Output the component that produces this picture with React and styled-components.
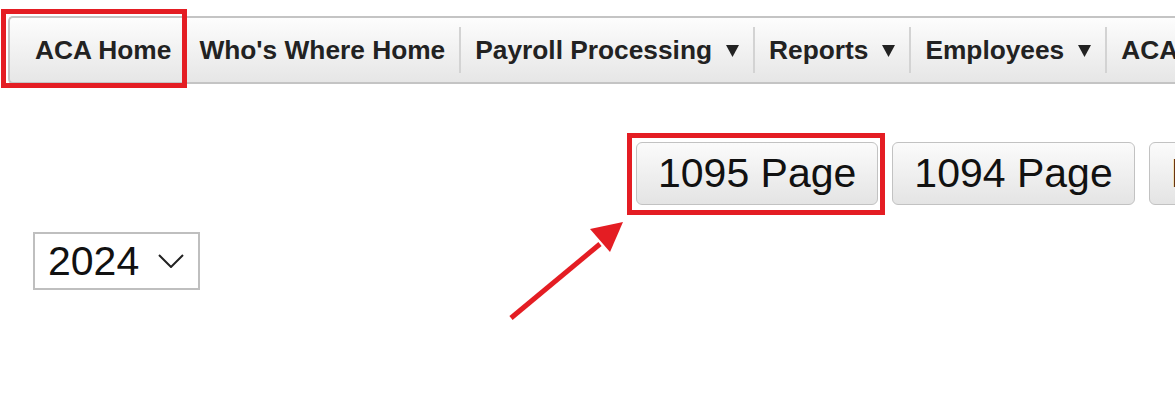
import React from 'react';
import styled, { createGlobalStyle } from 'styled-components';

const Global = createGlobalStyle`
  html, body { margin: 0; padding: 0; background: #fff; overflow: hidden; }
  body { font-family: "Liberation Sans", Arial, Helvetica, sans-serif; }
`;

const Page = styled.div`
  position: relative;
  width: 1175px;
  height: 397px;
  overflow: hidden;
  box-sizing: border-box;
  padding: 16px 0 0 8px;
`;

const NavBar = styled.nav`
  display: flex;
  align-items: stretch;
  width: 1320px;
  height: 68px;
  box-sizing: border-box;
  border: 2px solid #c4c4c4;
  border-right: none;
  border-radius: 5px 0 0 5px;
  background: linear-gradient(#fdfdfd, #e6e6e6);
  padding-left: 11px;
  white-space: nowrap;
`;

const NavItem = styled.div`
  display: flex;
  align-items: center;
  padding: 0 ${p => (p.$first ? 12 : 14)}px 0 14px;
  font-size: 26.3px;
  font-weight: 700;
  color: #222;
`;

const Separator = styled.div`
  width: 2px;
  height: 46px;
  align-self: center;
  background: #d3d3d3;
`;

const Caret = styled.svg`
  width: 13px;
  height: 12px;
  margin-left: 14px;
  margin-top: 1px;
`;

const Highlight = styled.div`
  position: relative;
  display: flex;
  &::after {
    content: "";
    position: absolute;
    top: ${p => p.$t}px;
    right: ${p => p.$r}px;
    bottom: ${p => p.$b}px;
    left: ${p => p.$l}px;
    border: 5px solid #e41d23;
    pointer-events: none;
  }
`;

const ButtonRow = styled.div`
  display: flex;
  gap: 14px;
  margin-top: 58px;
  padding-left: 628px;
  width: 900px;
`;

const PageButton = styled.button`
  height: 63px;
  padding: 0 21px;
  font-family: "Liberation Sans", Arial, sans-serif;
  font-size: 41px;
  color: #111;
  border: 1.5px solid #c2c2c2;
  border-radius: 6px;
  background: linear-gradient(#fbfbfb, #e4e4e4);
  white-space: nowrap;
  flex-shrink: 0;
`;

const YearSelect = styled.div`
  display: flex;
  align-items: center;
  justify-content: space-between;
  width: 167px;
  height: 58px;
  box-sizing: border-box;
  margin: 27px 0 0 25px;
  padding: 0 14px 0 13px;
  border: 2px solid #bfbfbf;
  font-size: 41px;
  color: #111;
`;

const Chevron = styled.svg`
  width: 26px;
  height: 14px;
`;

const ArrowOverlay = styled.svg`
  position: absolute;
  left: 0;
  top: 0;
  width: 1175px;
  height: 397px;
  pointer-events: none;
`;

const CaretIcon = () => (
  <Caret viewBox="0 0 13 12"><path d="M0 0 H13 L6.5 12 Z" fill="#222" /></Caret>
);

export default function App() {
  const menus = [
    { label: "Who's Where Home" },
    { label: 'Payroll Processing', caret: true },
    { label: 'Reports', caret: true },
    { label: 'Employees', caret: true },
    { label: 'ACA', caret: true },
  ];
  return (
    <>
      <Global />
      <Page>
        <NavBar>
          <Highlight $t={-9} $r={-4} $b={-6} $l={-20}>
            <NavItem $first>ACA Home</NavItem>
          </Highlight>
          {menus.map(m => (
            <React.Fragment key={m.label}>
              <Separator />
              <NavItem>
                {m.label}
                {m.caret && <CaretIcon />}
              </NavItem>
            </React.Fragment>
          ))}
        </NavBar>
        <ButtonRow>
          <Highlight $t={-9} $r={-7} $b={-10} $l={-9}>
            <PageButton>1095 Page</PageButton>
          </Highlight>
          <PageButton>1094 Page</PageButton>
          <PageButton>Letters</PageButton>
        </ButtonRow>
        <YearSelect>
          <span>2024</span>
          <Chevron viewBox="0 0 26 14">
            <path d="M1 1 L13 13 L25 1" fill="none" stroke="#222" strokeWidth="2" />
          </Chevron>
        </YearSelect>
        <ArrowOverlay viewBox="0 0 1175 397">
          <line x1="511" y1="318" x2="600" y2="244" stroke="#e41d23" strokeWidth="5" />
          <polygon points="623,222 590,229 610,252" fill="#e41d23" />
        </ArrowOverlay>
      </Page>
    </>
  );
}
